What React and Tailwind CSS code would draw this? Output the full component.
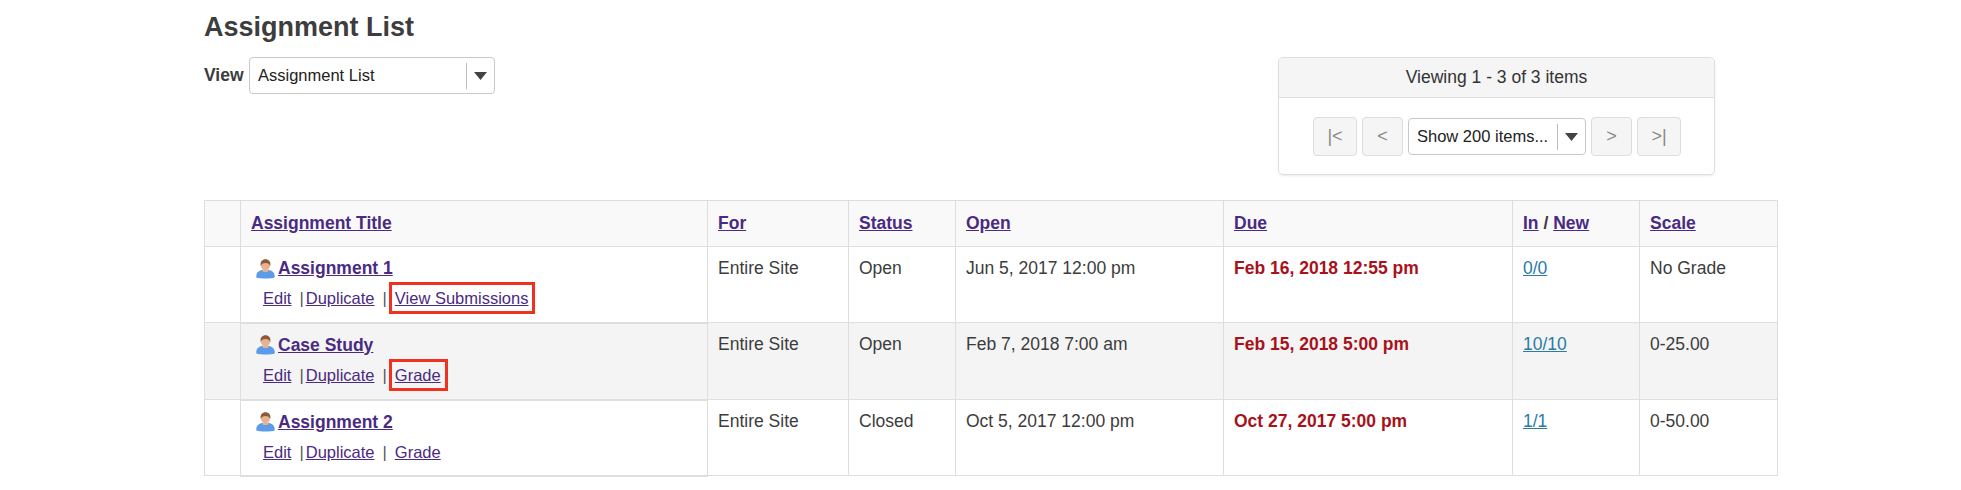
const assignments = [
  { title: "Assignment 1", action: "View Submissions", boxed: true, height: "h-[76px]", status: "Open", open: "Jun 5, 2017 12:00 pm", due: "Feb 16, 2018 12:55 pm", count: "0/0", scale: "No Grade" },
  { title: "Case Study", action: "Grade", boxed: true, shaded: true, height: "h-[77px]", status: "Open", open: "Feb 7, 2018 7:00 am", due: "Feb 15, 2018 5:00 pm", count: "10/10", scale: "0-25.00" },
  { title: "Assignment 2", action: "Grade", height: "h-[76px]", status: "Closed", open: "Oct 5, 2017 12:00 pm", due: "Oct 27, 2017 5:00 pm", count: "1/1", scale: "0-50.00" },
];

const linkClass = "text-[#4a2a82] underline";
const cellClass = "border border-[#dedede] align-top pl-[10px] pt-[9px] leading-[25px]";
const headClass = "border border-[#dedede] pl-[10px] text-left font-bold h-[46px]";

const Person = () => (
  <svg width="19" height="20" viewBox="0 0 19 20" className="shrink-0">
    <path d="M.4 18.500C-.2 14.600 1.600 12 5.500 11h8c3.900 1 5.700 3.600 5.100 7.500-3 1.400-15.200 1.400-18.200 0z" fill="#5b9be8" />
    <path d="M6 10.500h7l-1.200 2.600H7.200z" fill="#e3b08f" />
    <circle cx="9.500" cy="6.500" r="4.600" fill="#e6b392" />
    <path d="M4.700 7C3.900 2.400 6.400.3 9.500.3s5.600 2.100 4.800 6.700c-.8-1.900-2.300-2.900-4.800-2.900S5.500 5.100 4.700 7z" fill="#8a5a3a" />
  </svg>
);

const Caret = () => (
  <svg width="13" height="8" viewBox="0 0 13 8" className="shrink-0">
    <path d="M0 0h13L6.500 8z" fill="#444" />
  </svg>
);

const Select = ({ label, className }) => (
  <div className={`flex items-center bg-white border border-[#c8c8c8] rounded-[4px] text-[#222] text-[16.5px] ${className}`}>
    <span className="flex-1 pl-[8px] whitespace-nowrap">{label}</span>
    <span className="w-px h-[26px] bg-[#bbb]" />
    <span className="w-[27px] flex justify-center"><Caret /></span>
  </div>
);

const PageButton = ({ label, className }) => (
  <div className={`h-[39px] flex items-center justify-center bg-[#f5f5f5] border border-[#ddd] rounded-[4px] text-[#888] text-[18px] ${className}`}>{label}</div>
);

const Sep = ({ className }) => <span className={`text-[#555] ${className}`}>|</span>;

export default function App() {
  return (
    <div className="w-[1961px] h-[490px] bg-white pl-[204px] text-[#3c3c3c] text-[17.5px] overflow-hidden font-['Liberation_Sans',Arial,sans-serif]">
      <div className="flex justify-between items-start h-[200px] w-[1511px]">
        <div>
          <h1 className="text-[27px] leading-[30px] font-bold text-[#3d3d3d] pt-[12px]">Assignment List</h1>
          <div className="flex items-center mt-[15px]">
            <span className="font-bold text-[17.5px] w-[45px]">View</span>
            <Select label="Assignment List" className="w-[246px] h-[37px]" />
          </div>
        </div>
        <div className="mt-[57px] w-[437px] h-[118px] border border-[#dedede] rounded-[5px] shadow-[0_1px_2px_rgba(0,0,0,0.08)] overflow-hidden">
          <div className="h-[40px] flex items-center justify-center bg-[#f5f5f5] border-b border-[#dedede] text-[#333] text-[17.5px]">Viewing 1 - 3 of 3 items</div>
          <div className="flex items-center justify-center gap-[5px] h-[77px] pl-[1px]">
            <PageButton label="|<" className="w-[44px]" />
            <PageButton label="<" className="w-[41px]" />
            <Select label="Show 200 items..." className="w-[178px] h-[37px]" />
            <PageButton label=">" className="w-[41px]" />
            <PageButton label=">|" className="w-[44px]" />
          </div>
        </div>
      </div>

      <table className="w-[1573px] table-fixed border-collapse">
        <colgroup>
          <col className="w-[36px]" />
          <col className="w-[467px]" />
          <col className="w-[141px]" />
          <col className="w-[107px]" />
          <col className="w-[268px]" />
          <col className="w-[289px]" />
          <col className="w-[127px]" />
          <col className="w-[138px]" />
        </colgroup>
        <thead>
          <tr className="bg-[#f9f9f9]">
            <th className={headClass} />
            <th className={headClass}><a className={linkClass}>Assignment Title</a></th>
            <th className={headClass}><a className={linkClass}>For</a></th>
            <th className={headClass}><a className={linkClass}>Status</a></th>
            <th className={headClass}><a className={linkClass}>Open</a></th>
            <th className={headClass}><a className={linkClass}>Due</a></th>
            <th className={headClass}><a className={linkClass}>In</a> / <a className={linkClass}>New</a></th>
            <th className={headClass}><a className={linkClass}>Scale</a></th>
          </tr>
        </thead>
        <tbody>
          {assignments.map((row) => (
            <tr key={row.title} className={`${row.height} ${row.shaded ? "bg-[#f4f4f4]" : ""}`}>
              <td className={cellClass} />
              <td className={`${cellClass} border-b-2`}>
                <div className="flex items-center gap-[3px] pl-[5px]">
                  <Person />
                  <a className={`${linkClass} font-bold`}>{row.title}</a>
                </div>
                <div className="flex items-center h-[32px] mt-[1px] pl-[12px] text-[16.5px] leading-[20px]">
                  <a className={linkClass}>Edit</a>
                  <Sep className="ml-[8px] mr-[2px]" />
                  <a className={linkClass}>Duplicate</a>
                  <Sep className="ml-[8px] mr-[5px]" />
                  <span className={`pl-[3px] pr-[4px] h-[32px] flex items-center -ml-[3px] border-[3px] ${row.boxed ? "border-[#f0311f]" : "border-transparent"}`}>
                    <a className={linkClass}>{row.action}</a>
                  </span>
                </div>
              </td>
              <td className={cellClass}>Entire Site</td>
              <td className={cellClass}>{row.status}</td>
              <td className={cellClass}>{row.open}</td>
              <td className={`${cellClass} font-bold text-[#a8121a]`}>{row.due}</td>
              <td className={cellClass}><a className="text-[#2a7ba6] underline">{row.count}</a></td>
              <td className={cellClass}>{row.scale}</td>
            </tr>
          ))}
        </tbody>
      </table>
    </div>
  );
}
